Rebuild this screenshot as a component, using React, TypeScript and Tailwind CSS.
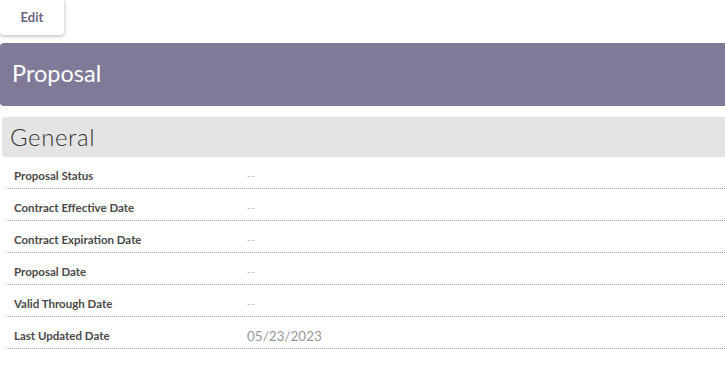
import React from 'react';

const rows: { label: string; value?: string }[] = [
    { label: 'Proposal Status' },
    { label: 'Contract Effective Date' },
    { label: 'Contract Expiration Date' },
    { label: 'Proposal Date' },
    { label: 'Valid Through Date' },
    { label: 'Last Updated Date', value: '05/23/2023' },
];

export default function App() {
    return (
        <div className="w-[725px] h-[370px] bg-white overflow-hidden font-['Lato','Noto_Sans',sans-serif]">
            {/* Toolbar */}
            <div className="flex h-[43px] items-start">
                <button className="h-[35px] w-[64px] rounded-b-[4px] bg-white text-[13px] font-bold text-[#6a6585] shadow-[0_1px_4px_rgba(0,0,0,0.3)]">
                    Edit
                </button>
            </div>

            {/* Header */}
            <div className="flex h-[63px] items-center rounded-l-[4px] bg-[#807a98] pl-3 pb-[2px]">
                <h1 className="text-[23.5px] text-white">Proposal</h1>
            </div>

            {/* Section */}
            <div className="mt-[11px] ml-[2px] flex h-[40px] items-center rounded-l-[4px] bg-[#e4e4e4] pl-2">
                <h2 className="text-[24px] font-light tracking-[0.6px] text-[#333]">General</h2>
            </div>

            <div className="ml-[6px]">
                {rows.map((r) => (
                    <div key={r.label} className="flex h-[32px] items-center border-b border-dotted border-[#aaa] pt-[7px]">
                        <div className="w-[241px] pl-2 text-[11.5px] font-bold text-[#4a4a4a]">{r.label}</div>
                        {r.value ? (
                            <div className="text-[13.5px] text-[#999]">{r.value}</div>
                        ) : (
                            <div className="text-[11px] text-[#c4c4c4]">--</div>
                        )}
                    </div>
                ))}
            </div>
        </div>
    );
}
